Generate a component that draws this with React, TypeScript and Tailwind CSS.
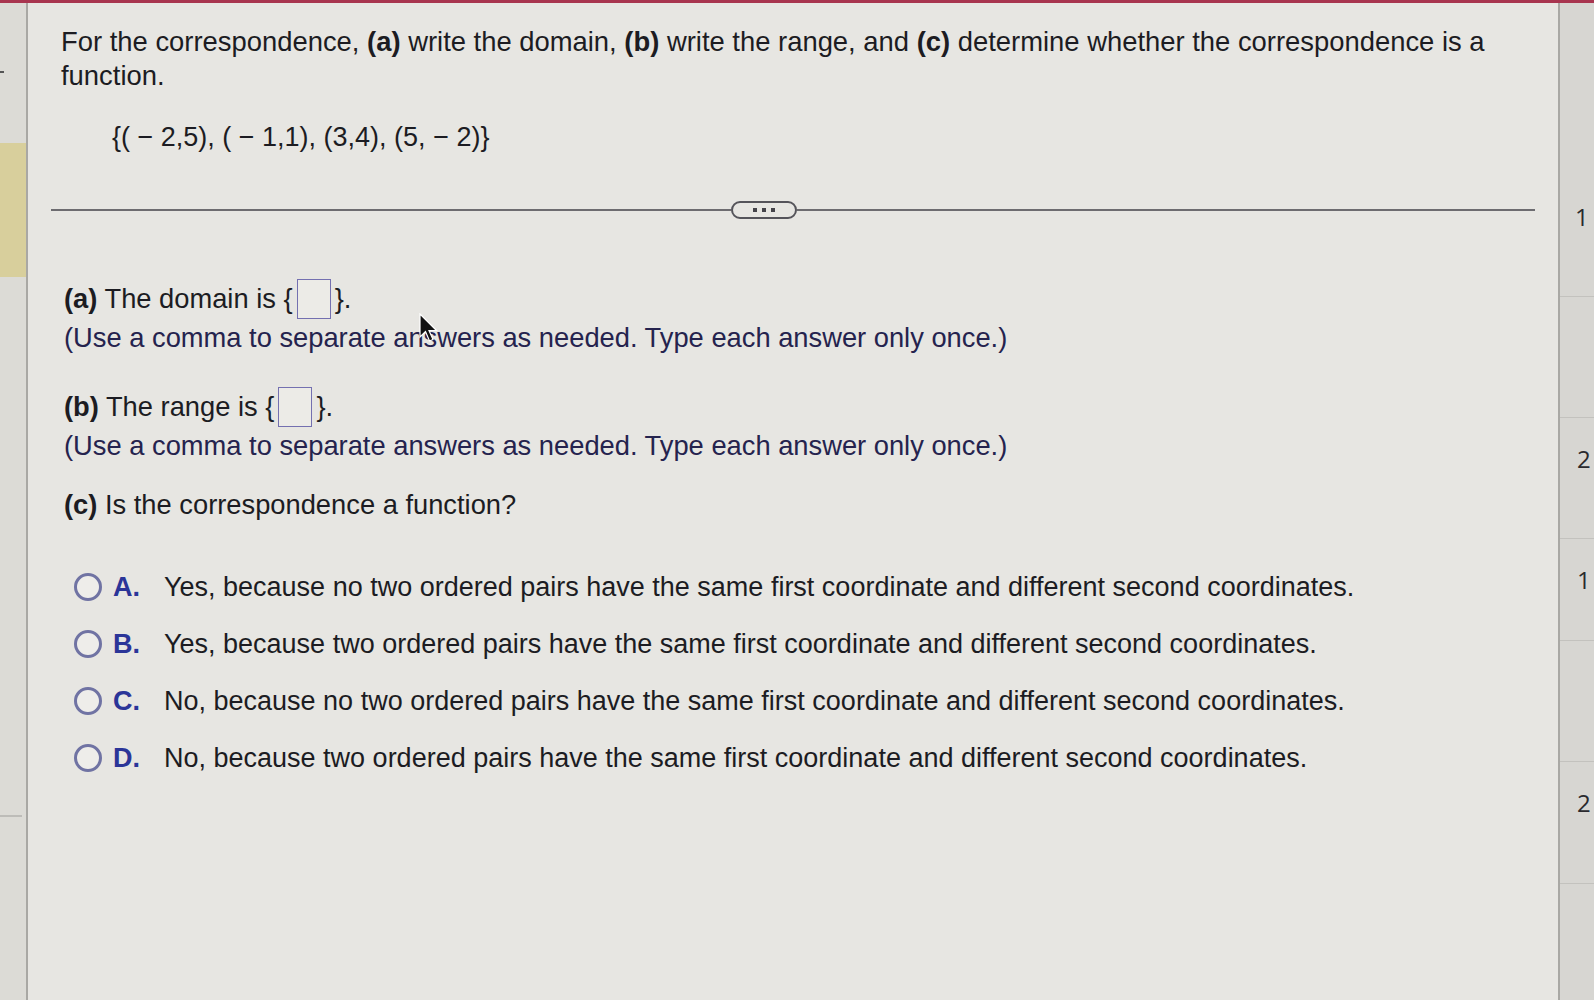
import React from 'react';

const options = [
  { key: 'A', text: 'Yes, because no two ordered pairs have the same first coordinate and different second coordinates.' },
  { key: 'B', text: 'Yes, because two ordered pairs have the same first coordinate and different second coordinates.' },
  { key: 'C', text: 'No, because no two ordered pairs have the same first coordinate and different second coordinates.' },
  { key: 'D', text: 'No, because two ordered pairs have the same first coordinate and different second coordinates.' },
];

// answer box between the set braces
const AnswerBox: React.FC = () => (
  <span className="inline-block align-middle w-[34px] h-[40px] border-[1.5px] border-[#7470b0] bg-[#ecebe7] mx-[4px] -mt-[4px]" />
);

const SideRow: React.FC<{ h: string; label?: string }> = ({ h, label }) => (
  <div className={`${h} border-b border-[#c3c2be] pl-[17px] pt-[27px] text-[24px] leading-[28px] text-[#2a2a2e]`}>
    {label}
  </div>
);

const App: React.FC = () => {
  return (
    <div className="relative h-screen w-full flex flex-col bg-[#e7e6e2] overflow-hidden font-['Liberation_Sans',Arial,sans-serif]">
      <div className="h-[3px] w-full bg-[#a8354f] flex-shrink-0" />

      <div className="flex flex-1 min-h-0">
        {/* left sidebar */}
        <aside className="w-[28px] flex-shrink-0 bg-[#dcdbd6] border-r-2 border-[#a9a8a4] flex flex-col">
          <div className="h-[68px]" />
          <div className="h-[2px] w-[4px] bg-[#555]" />
          <div className="h-[70px]" />
          <div className="h-[134px] bg-[#d8cf9c]" />
          <div className="h-[538px]" />
          <div className="h-[2px] w-[22px] bg-[#bdbcb8]" />
        </aside>

        {/* main question area */}
        <main className="flex-1 min-w-0 flex flex-col pt-[22px] text-[27px] text-[#1c1c22]">
          <div className="pl-[33px] pr-[20px] leading-[34px]">
            <p className="text-[27.4px] whitespace-nowrap">
              For the correspondence, <b>(a)</b> write the domain, <b>(b)</b> write the range, and <b>(c)</b> determine whether the correspondence is a
            </p>
            <p className="text-[27.4px]">function.</p>
            <p className="mt-[27px] pl-[51px]">{'{( \u2212 2,5), ( \u2212 1,1), (3,4), (5, \u2212 2)}'}</p>
          </div>

          <div className="mt-[47px] mx-[23px] h-[18px] flex items-center">
            <div className="w-[680px] h-[2px] bg-[#6d6c70]" />
            <div className="w-[66px] h-[18px] rounded-full border-2 border-[#55545a] flex items-center justify-center gap-[5px]">
              <span className="w-[4px] h-[4px] bg-[#45444a]" />
              <span className="w-[4px] h-[4px] bg-[#45444a]" />
              <span className="w-[4px] h-[4px] bg-[#45444a]" />
            </div>
            <div className="flex-1 h-[2px] bg-[#6d6c70]" />
          </div>

          <div className="pl-[36px] leading-[38px] text-[27.3px]">
            <div className="mt-[61px]">
              <p>
                <b>(a)</b> The domain is {'{'}<AnswerBox />{'}'}.
              </p>
              <p className="text-[#25234e]">(Use a comma to separate answers as needed. Type each answer only once.)</p>
            </div>
            <div className="mt-[31px]">
              <p>
                <b>(b)</b> The range is {'{'}<AnswerBox />{'}'}.
              </p>
              <p className="text-[#25234e]">(Use a comma to separate answers as needed. Type each answer only once.)</p>
            </div>
            <p className="mt-[21px]">
              <b>(c)</b> Is the correspondence a function?
            </p>
          </div>

          <div className="mt-[35px] pl-[46px] flex flex-col">
            {options.map((o) => (
              <div key={o.key} className="h-[57px] flex items-center">
                <span className="w-[28px] h-[28px] rounded-full border-[3px] border-[#7073a3] bg-[#eeedea] flex-shrink-0" />
                <span className="ml-[11px] w-[51px] font-bold text-[#2b3598]">{o.key}.</span>
                <span>{o.text}</span>
              </div>
            ))}
          </div>
        </main>

        {/* right strip */}
        <aside className="w-[36px] flex-shrink-0 bg-[#d7d6d2] border-l-2 border-[#a9a8a4] flex flex-col overflow-hidden font-['Open_Sans',sans-serif]">
          <div className="h-[173px]" />
          <div className="h-[121px] border-b border-[#c3c2be] pl-[15px] pt-[27px] text-[24px] leading-[28px] text-[#2a2a2e]">1</div>
          <SideRow h="h-[121px]" />
          <SideRow h="h-[121px]" label="2" />
          <SideRow h="h-[102px]" label="1" />
          <SideRow h="h-[121px]" />
          <SideRow h="h-[122px]" label="2" />
        </aside>
      </div>

      {/* mouse pointer */}
      <svg className="absolute left-[419px] top-[313px]" width="20" height="30" viewBox="0 0 20 30">
        <path d="M1 1 L1 24 L6.5 18.5 L10.5 28 L14 26.5 L10 17.5 L17.5 17.5 Z" fill="#111" stroke="#fff" strokeWidth="1.2" />
      </svg>
    </div>
  );
};

export default App;
